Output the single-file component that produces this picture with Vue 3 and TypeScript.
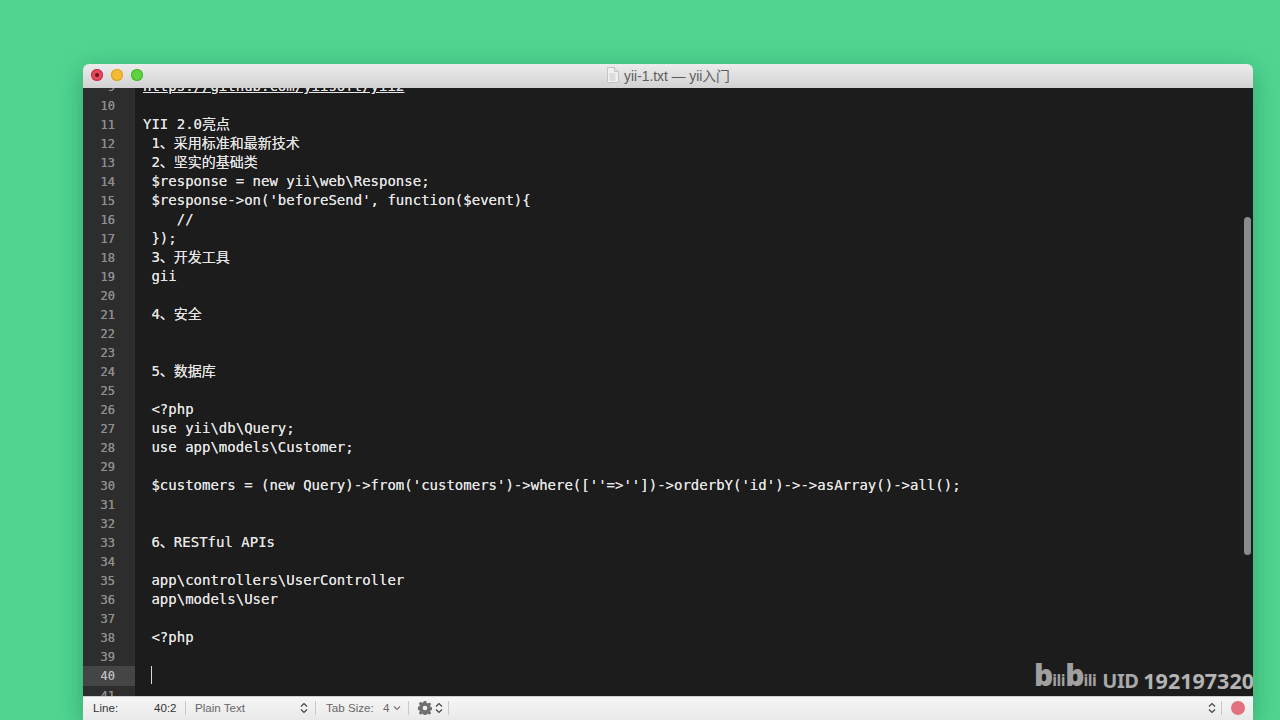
<script setup lang="ts">
const first = 9
const code: string[] = [
  'https://github.com/yiisoft/yii2',
  '',
  'YII 2.0亮点',
  ' 1、采用标准和最新技术',
  ' 2、坚实的基础类',
  ' $response = new yii\\web\\Response;',
  " $response->on('beforeSend', function($event){",
  '    //',
  ' });',
  ' 3、开发工具',
  ' gii',
  '',
  ' 4、安全',
  '',
  '',
  ' 5、数据库',
  '',
  ' <?php',
  ' use yii\\db\\Query;',
  ' use app\\models\\Customer;',
  '',
  " $customers = (new Query)->from('customers')->where([''=>''])->orderbY('id')->->asArray()->all();",
  '',
  '',
  ' 6、RESTful APIs',
  '',
  ' app\\controllers\\UserController',
  ' app\\models\\User',
  '',
  ' <?php',
  '',
  ' ',
  '',
]
const rows = code.map((text, i) => ({ n: i + first, text }))
</script>

<template>
  <div class="page">
    <div class="window">
      <header class="titlebar">
        <div class="lights">
          <span class="light red"><i></i></span>
          <span class="light yellow"></span>
          <span class="light green"></span>
        </div>
        <div class="title">
          <svg class="doc" width="13" height="16" viewBox="0 0 13 16">
            <path d="M1.500 .5h7l4 4v11h-11z" fill="#f0f0f0" stroke="#c4c4c4" />
            <path d="M8.500 .5v4h4" fill="#e2e2e2" stroke="#c4c4c4" />
            <path d="M3.500 7h6M3.500 9h6M3.500 11h6M3.500 13h6" stroke="#c8c8c8" />
          </svg>
          <span>yii-1.txt — yii入门</span>
        </div>
      </header>

      <main class="editor">
        <div class="rows">
          <div v-for="r in rows" :key="r.n" class="row" :class="{ active: r.n === 40 }">
            <div class="num">{{ r.n }}</div>
            <div class="text" :class="{ link: r.n === 9 }">{{ r.text }}<span v-if="r.n === 40" class="caret"></span></div>
          </div>
        </div>
        <div class="thumb"></div>
        <div class="mark">
          <span class="logo"><b>b</b>ili<b>b</b>ili</span>
          <span class="uid">UID</span>
          <span class="digits">192197320</span>
        </div>
      </main>

      <footer class="status">
        <span class="s-line">Line:</span>
        <span class="s-pos">40:2</span>
        <i class="sep"></i>
        <span class="s-syntax">Plain Text</span>
        <svg class="updown" width="8" height="12" viewBox="0 0 8 12"><path d="M1 4.500 4 1.500 7 4.500M1 7.500 4 10.500 7 7.500" /></svg>
        <i class="sep"></i>
        <span class="s-tab">Tab Size:</span>
        <span class="s-four">4</span>
        <svg class="chev" width="8" height="6" viewBox="0 0 8 6"><path d="M1 1.500 4 4.500 7 1.500" /></svg>
        <i class="sep"></i>
        <svg class="gear" width="14" height="14" viewBox="0 0 15 15">
          <path d="M6.200 0h2.600l.4 2 1.400.6 1.700-1.100 1.800 1.800-1.100 1.700.6 1.400 2 .4v2.600l-2 .4-.6 1.400 1.100 1.700-1.800 1.800-1.700-1.100-1.400.6-.4 2H6.200l-.4-2-1.400-.6-1.700 1.100-1.800-1.800 1.100-1.700-.6-1.400-2-.4V6.200l2-.4.6-1.400-1.100-1.700 1.800-1.800 1.700 1.100 1.400-.6zM7.500 5a2.500 2.500 0 1 0 0 5 2.500 2.500 0 0 0 0-5z" fill="#707070" fill-rule="evenodd" />
        </svg>
        <svg class="updown small" width="8" height="12" viewBox="0 0 8 12"><path d="M1 4.500 4 1.500 7 4.500M1 7.500 4 10.500 7 7.500" /></svg>
        <i class="sep"></i>
        <span class="grow"></span>
        <svg class="updown last" width="8" height="12" viewBox="0 0 8 12"><path d="M1 4.500 4 1.500 7 4.500M1 7.500 4 10.500 7 7.500" /></svg>
        <i class="sep right"></i>
        <span class="rec"></span>
      </footer>
    </div>
  </div>
</template>

<style>
html, body { margin: 0; overflow: hidden; }
</style>

<style scoped>
.page {
  width: 1280px;
  height: 720px;
  box-sizing: border-box;
  padding: 64px 27px 0 83px;
  background: #50d590;
  overflow: hidden;
}
.window {
  height: 656px;
  display: flex;
  flex-direction: column;
  border-radius: 6px 6px 0 0;
  overflow: hidden;
  box-shadow: 0 6px 26px rgba(20, 90, 60, .4);
}
.titlebar {
  flex: 0 0 24px;
  position: relative;
  display: flex;
  align-items: center;
  justify-content: center;
  padding-bottom: 2px;
  box-sizing: border-box;
  background: linear-gradient(#ececec, #d2d2d2);
}
.lights {
  position: absolute;
  left: 8px;
  top: 5px;
  display: flex;
  gap: 8px;
}
.light {
  width: 12px;
  height: 12px;
  border-radius: 50%;
  display: flex;
  align-items: center;
  justify-content: center;
}
.red { background: #e4485c; box-shadow: inset 0 0 0 1px #c53048; }
.red i { width: 4px; height: 4px; border-radius: 50%; background: #6e1420; }
.yellow { background: #f5bb32; box-shadow: inset 0 0 0 1px #d89f22; }
.green { background: #5fd23f; box-shadow: inset 0 0 0 1px #45b02c; }
.title {
  display: flex;
  align-items: center;
  gap: 5px;
  font: 13.8px "Liberation Sans", "Noto Sans CJK SC", sans-serif;
  color: #5c5c5c;
}
.editor {
  flex: 1;
  position: relative;
  overflow: hidden;
  background: #1c1c1c;
}
.rows { margin-top: -11px; }
.row {
  display: flex;
  height: 19.03px;
  overflow: hidden;
}
.num {
  width: 52px;
  flex: none;
  box-sizing: border-box;
  padding-right: 20px;
  text-align: right;
  background: #2d2d2d;
  color: #8e8e8e;
  font: 12px/21px "DejaVu Sans Mono", monospace;
  text-shadow: 0 0 .5px #999;
}
.text {
  margin-left: 8px;
  white-space: pre;
  color: #e6e6e6;
  font: 14px/19.03px "DejaVu Sans Mono", "Noto Sans CJK SC", monospace;
  text-shadow: 0 0 .6px rgba(235, 235, 235, .9);
}
.link { text-decoration: underline; }
.active .num { background: #454545; color: #c0c0c0; }
.caret {
  display: inline-block;
  width: 1px;
  height: 18px;
  background: #d8d8d8;
  vertical-align: -4px;
}
.thumb {
  position: absolute;
  right: 2px;
  top: 129px;
  width: 7px;
  height: 338px;
  border-radius: 4px;
  background: #8b8b8b;
}
.mark {
  position: absolute;
  right: -1px;
  top: 577px;
  display: flex;
  align-items: flex-end;
  color: #b4b4b4;
  font-family: "Noto Sans", "Liberation Sans", sans-serif;
  font-weight: 700;
  line-height: 28px;
  height: 30px;
}
.logo {
  font-size: 16px;
  letter-spacing: -.5px;
  color: #a0a0a0;
  margin-right: 6px;
  line-height: 30px;
}
.logo b { font-size: 30px; line-height: 30px; letter-spacing: -1px; }
.uid { font-size: 20px; letter-spacing: -.5px; margin-right: 5px; color: #a8a8a8; }
.digits { font-size: 21.5px; }
.status {
  flex: 0 0 24px;
  display: flex;
  align-items: center;
  padding-bottom: 2px;
  background: linear-gradient(#f6f6f6, #e9e9e9);
  border-top: 1px solid #cfcfcf;
  box-sizing: border-box;
  font: 11.6px "Liberation Sans", sans-serif;
  color: #666;
}
.sep { width: 1px; height: 14px; background: #c8c8c8; flex: none; }
.s-line { margin-left: 10px; color: #333; width: 61px; }
.s-pos { color: #333; width: 31px; }
.s-syntax { margin-left: 9px; width: 105px; flex: none; }
.s-tab { margin-left: 10px; width: 57px; flex: none; }
.s-four { width: 10px; }
.updown { fill: none; stroke: #444; stroke-width: 1.2; margin-right: 7px; flex: none; }
.chev { fill: none; stroke: #777; stroke-width: 1.2; margin-right: 7px; flex: none; }
.gear { margin-left: 9px; margin-right: 3px; flex: none; }
.updown.small { margin-right: 5px; }
.updown.last { margin-right: 5px; }
.grow { flex: 1; }
.sep.right { margin-right: 9px; }
.rec {
  width: 14px;
  height: 14px;
  border-radius: 50%;
  background: #e2707f;
  margin-right: 8px;
  flex: none;
}
</style>
